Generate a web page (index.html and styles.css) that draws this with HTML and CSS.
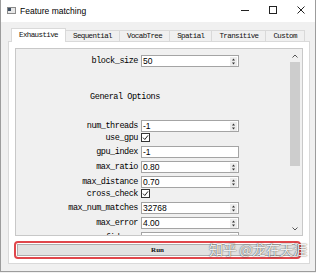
FILE: index.html
```html
<!DOCTYPE html>
<html>
<head>
<meta charset="utf-8">
<link rel="stylesheet" href="styles.css">
</head>
<body>
<div class="window">
  <div class="titlebar">
    <svg class="app-icon" width="9" height="7" viewBox="0 0 9 7"><rect x="0.5" y="0.5" width="8" height="6" fill="#e8e8e8" stroke="#8a8a8a"/><rect x="1" y="1" width="3" height="3" fill="#3d4f63"/></svg>
    <span class="title">Feature matching</span>
    <div class="controls">
      <div class="ctl"><svg width="8" height="8" viewBox="0 0 8 8"><line x1="0" y1="4.5" x2="8" y2="4.5" stroke="#222" stroke-width="1"/></svg></div>
      <div class="ctl"><svg width="8" height="8" viewBox="0 0 8 8"><rect x="0.5" y="0.5" width="7" height="7" fill="none" stroke="#222" stroke-width="1"/></svg></div>
      <div class="ctl"><svg width="8" height="8" viewBox="0 0 8 8"><path d="M0.5 0.5 L7.5 7.5 M7.5 0.5 L0.5 7.5" stroke="#222" stroke-width="1"/></svg></div>
    </div>
  </div>
  <div class="client">
    <div class="tabbar">
      <div class="tab active">Exhaustive</div>
      <div class="tab">Sequential</div>
      <div class="tab">VocabTree</div>
      <div class="tab">Spatial</div>
      <div class="tab">Transitive</div>
      <div class="tab">Custom</div>
    </div>
    <div class="pane">
      <div class="scroll">
        <div class="content">
          <div class="form">
            <div class="label">block_size</div>
            <div class="field spin"><span class="val">50</span><svg class="arrows" width="7" height="9" viewBox="0 0 7 9"><rect x="0" y="0" width="7" height="9" fill="#ececec"/><path d="M2 3.5 L3.5 1.5 L5 3.5 Z M2 5.5 L5 5.5 L3.5 7.5 Z" fill="#333"/></svg></div>

            <div class="heading">General Options</div>

            <div class="label">num_threads</div>
            <div class="field spin"><span class="val">-1</span><svg class="arrows" width="7" height="9" viewBox="0 0 7 9"><rect x="0" y="0" width="7" height="9" fill="#ececec"/><path d="M2 3.5 L3.5 1.5 L5 3.5 Z M2 5.5 L5 5.5 L3.5 7.5 Z" fill="#333"/></svg></div>

            <div class="label cbl">use_gpu</div>
            <div class="cbcell"><svg class="check" width="9" height="9" viewBox="0 0 9 9"><rect x="0.5" y="0.5" width="8" height="8" fill="#fff" stroke="#333"/><path d="M2 4.6 L3.8 6.5 L7 2.4" fill="none" stroke="#222" stroke-width="1"/></svg></div>

            <div class="label">gpu_index</div>
            <div class="field"><span class="val">-1</span></div>

            <div class="label">max_ratio</div>
            <div class="field spin"><span class="val">0.80</span><svg class="arrows" width="7" height="9" viewBox="0 0 7 9"><rect x="0" y="0" width="7" height="9" fill="#ececec"/><path d="M2 3.5 L3.5 1.5 L5 3.5 Z M2 5.5 L5 5.5 L3.5 7.5 Z" fill="#333"/></svg></div>

            <div class="label">max_distance</div>
            <div class="field spin"><span class="val">0.70</span><svg class="arrows" width="7" height="9" viewBox="0 0 7 9"><rect x="0" y="0" width="7" height="9" fill="#ececec"/><path d="M2 3.5 L3.5 1.5 L5 3.5 Z M2 5.5 L5 5.5 L3.5 7.5 Z" fill="#333"/></svg></div>

            <div class="label cbl">cross_check</div>
            <div class="cbcell"><svg class="check" width="9" height="9" viewBox="0 0 9 9"><rect x="0.5" y="0.5" width="8" height="8" fill="#fff" stroke="#333"/><path d="M2 4.6 L3.8 6.5 L7 2.4" fill="none" stroke="#222" stroke-width="1"/></svg></div>

            <div class="label">max_num_matches</div>
            <div class="field spin"><span class="val">32768</span><svg class="arrows" width="7" height="9" viewBox="0 0 7 9"><rect x="0" y="0" width="7" height="9" fill="#ececec"/><path d="M2 3.5 L3.5 1.5 L5 3.5 Z M2 5.5 L5 5.5 L3.5 7.5 Z" fill="#333"/></svg></div>

            <div class="label">max_error</div>
            <div class="field spin"><span class="val">4.00</span><svg class="arrows" width="7" height="9" viewBox="0 0 7 9"><rect x="0" y="0" width="7" height="9" fill="#ececec"/><path d="M2 3.5 L3.5 1.5 L5 3.5 Z M2 5.5 L5 5.5 L3.5 7.5 Z" fill="#333"/></svg></div>

            <div class="label">confidence</div>
            <div class="field spin"><span class="val">0.99900</span><svg class="arrows" width="7" height="9" viewBox="0 0 7 9"><rect x="0" y="0" width="7" height="9" fill="#ececec"/><path d="M2 3.5 L3.5 1.5 L5 3.5 Z M2 5.5 L5 5.5 L3.5 7.5 Z" fill="#333"/></svg></div>
          </div>
        </div>
        <div class="scrollbar">
          <div class="sb-arrow"><svg width="6" height="4" viewBox="0 0 6 4"><path d="M0.5 3.5 L3 1 L5.5 3.5" fill="none" stroke="#555" stroke-width="1"/></svg></div>
          <div class="track"><div class="thumb"></div></div>
          <div class="sb-arrow"><svg width="6" height="4" viewBox="0 0 6 4"><path d="M0.5 0.5 L3 3 L5.5 0.5" fill="none" stroke="#555" stroke-width="1"/></svg></div>
        </div>
      </div>
      <div class="run-outline"><div class="run">Run</div></div>
    </div>
  </div>
  <div class="watermark">知乎 @龙在天涯</div>
</div>
</body>
</html>
```
FILE: styles.css
```css
* { box-sizing: border-box; margin: 0; padding: 0; }
html, body { width: 316px; height: 273px; overflow: hidden; }
body { background: #f0f0f0; font-family: "Liberation Mono", monospace; color: #000; }

.window {
  position: relative;
  width: 316px;
  height: 272px;
  border: 1px solid #9c9c9c;
  border-top: none;
  background: #f0f0f0;
  display: flex;
  flex-direction: column;
}

.titlebar {
  height: 22px;
  background: #fff;
  display: flex;
  align-items: center;
  padding-left: 6px;
  flex-shrink: 0;
}
.app-icon { display: block; margin-top: -1px; }
.title {
  margin-left: 4px;
  font-family: "Liberation Sans", Arial, sans-serif;
  font-size: 8.5px;
  color: #000;
  margin-top: -1px;
}
.controls { margin-left: auto; display: flex; height: 100%; }
.ctl {
  width: 28px;
  height: 100%;
  display: flex;
  align-items: center;
  justify-content: center;
  padding-bottom: 2px;
}
.ctl svg { display: block; }

.client { padding: 6px 0 0 7px; }

.tabbar {
  position: relative;
  z-index: 1;
  display: flex;
  align-items: flex-end;
  height: 14px;
  margin-left: 3px;
  margin-bottom: -1px;
}
.tab {
  height: 11px;
  margin-bottom: 1px;
  padding: 0 7px;
  font-size: 7.5px;
  letter-spacing: -0.6px;
  line-height: 10px;
  background: #f0f0f0;
  border: 1px solid #d9d9d9;
  border-bottom: none;
  border-left: none;
  color: #111;
  white-space: nowrap;
}
.tab.active {
  height: 14px;
  margin-bottom: 0;
  background: #fff;
  border-left: 1px solid #d9d9d9;
  line-height: 12px;
}

.pane {
  width: 302px;
  height: 223px;
  border: 1px solid #d9d9d9;
  background: #fff;
  padding: 6px 6px 4px 6px;
}

.scroll {
  height: 188px;
  border: 1px solid #c8c8c8;
  background: #f0f0f0;
  display: flex;
}
.content {
  flex: 1;
  overflow: hidden;
  padding-top: 6px;
}
.form {
  display: grid;
  grid-template-columns: 122px 98px;
  column-gap: 3px;
  row-gap: 3px;
  align-items: center;
}
.label {
  justify-self: end;
  font-size: 8.5px;
  letter-spacing: -0.45px;
  line-height: 10px;
  white-space: nowrap;
}
.heading {
  grid-column: 1 / -1;
  justify-self: center;
  font-size: 8.5px;
  letter-spacing: -0.45px;
  line-height: 10px;
  margin: 22px 0 15px 0;
  padding-right: 5px;
}
.field {
  height: 12px;
  background: #fff;
  border: 1px solid #a4a4a4;
  display: flex;
  align-items: center;
  padding-left: 1px;
  padding-right: 1px;
}
.val {
  flex: 1;
  font-family: "Liberation Sans", Arial, sans-serif;
  font-size: 8.5px;
  line-height: 10px;
}
.arrows { display: block; }
.cbcell { height: 8px; }
.check { display: block; margin-top: -2px; }
.label.cbl { align-self: start; line-height: 8px; height: 8px; margin-top: -1px; }

.scrollbar {
  width: 14px;
  display: flex;
  flex-direction: column;
  background: #f0f0f0;
}
.sb-arrow {
  height: 13px;
  display: flex;
  align-items: center;
  justify-content: center;
}
.sb-arrow svg { display: block; }
.track { flex: 1; padding: 0 2px; }
.thumb { height: 104px; background: #cdcdcd; }

.run-outline {
  margin-top: 5px;
  margin-left: -1px;
  width: 287px;
  height: 18px;
  border: 2px solid #e0464b;
  border-radius: 4px;
  padding: 1px;
}
.run {
  height: 100%;
  background: #e1e1e1;
  border: 1px solid #adadad;
  display: flex;
  align-items: center;
  justify-content: center;
  font-family: "Liberation Serif", serif;
  font-weight: bold;
  font-size: 7px;
  line-height: 10px;
  color: #111;
}

.watermark {
  position: absolute;
  left: 208px;
  top: 240px;
  font-family: "Noto Sans CJK SC", sans-serif;
  font-size: 14px;
  line-height: 18px;
  color: rgba(255, 255, 255, 0.92);
  text-shadow: 0 0 1px rgba(0, 0, 0, 0.7), 0 0 2px rgba(0, 0, 0, 0.35);
  white-space: nowrap;
  letter-spacing: -0.3px;
}
```
